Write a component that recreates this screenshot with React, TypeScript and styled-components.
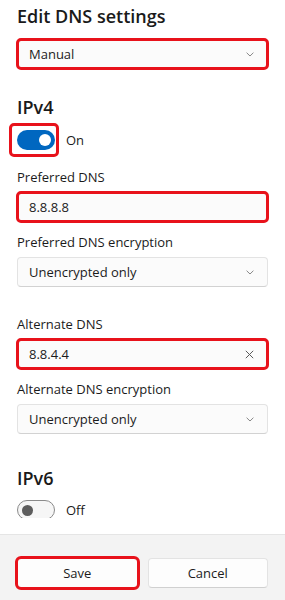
import { createGlobalStyle } from 'styled-components'
import styled from 'styled-components'

const GlobalStyle = createGlobalStyle`
  html, body {
    margin: 0;
    padding: 0;
    background: #ffffff;
  }
  body {
    font-family: 'Open Sans', 'Noto Sans', sans-serif;
    color: #1b1b1b;
  }
`

const Page = styled.div`
  width: 285px;
  height: 600px;
  display: flex;
  flex-direction: column;
  background: #ffffff;
  overflow: hidden;
`
const ScrollArea = styled.div`
  height: 518px;
  overflow: hidden;
  padding: 0 17px;
  box-sizing: border-box;
`
const Spacer = styled.div`
  height: 16px;
`
const Title = styled.h1`
  margin: 4px 0 0;
  font-size: 18px;
  line-height: 24px;
  font-weight: 600;
  color: #1a1a1a;
`
const Heading = styled.h2<{ $top: number }>`
  margin: ${(p) => p.$top}px 0 0;
  font-size: 18px;
  line-height: 24px;
  font-weight: 600;
  color: #1a1a1a;
`
const Label = styled.div<{ $top: number }>`
  margin: ${(p) => p.$top}px 0 5px;
  font-size: 13px;
  line-height: 20px;
  color: #1b1b1b;
`
const Field = styled.div<{ $marked?: boolean; $top?: number }>`
  margin-top: ${(p) => p.$top ?? 0}px;
  height: 30px;
  box-sizing: border-box;
  display: flex;
  align-items: center;
  justify-content: space-between;
  padding: 0 13px 0 11px;
  background: #fbfbfb;
  border: 1px solid #e3e3e3;
  border-bottom-color: #d2d2d2;
  border-radius: 4px;
  font-size: 13px;
  color: #1b1b1b;
  outline: ${(p) => (p.$marked ? '3px solid #e8121b' : 'none')};
  outline-offset: -2px;
`
const ToggleRow = styled.div<{ $top: number }>`
  margin-top: ${(p) => p.$top}px;
  display: flex;
  align-items: center;
  gap: 11px;
  font-size: 13px;
  line-height: 20px;
  color: #1b1b1b;
`
const ToggleFrame = styled.div<{ $marked?: boolean }>`
  margin: -7px -4px -7px -8px;
  padding: 4px 1px 4px 5px;
  border: 3px solid ${(p) => (p.$marked ? '#e8121b' : 'transparent')};
  border-radius: 5px;
  display: flex;
`
const Toggle = styled.div<{ $on?: boolean }>`
  width: 38px;
  height: 20px;
  box-sizing: border-box;
  border-radius: 10px;
  display: flex;
  align-items: center;
  justify-content: ${(p) => (p.$on ? 'flex-end' : 'flex-start')};
  padding: 0 4px;
  background: ${(p) => (p.$on ? '#0067c0' : '#f6f6f6')};
  border: ${(p) => (p.$on ? 'none' : '1px solid #8a8a8a')};
`
const Knob = styled.div<{ $on?: boolean }>`
  width: ${(p) => (p.$on ? 12 : 11)}px;
  height: ${(p) => (p.$on ? 12 : 11)}px;
  border-radius: 50%;
  background: ${(p) => (p.$on ? '#ffffff' : '#5d5d5d')};
`
const Footer = styled.div`
  flex: 1;
  border-top: 1px solid #e5e5e5;
  background: #f3f3f3;
  padding: 23px 17px 0;
  display: grid;
  grid-template-columns: 1fr 1fr;
  gap: 10px;
  align-content: start;
`
const Button = styled.button<{ $marked?: boolean }>`
  height: 30px;
  border: 1px solid #e3e3e3;
  border-bottom-color: #d0d0d0;
  border-radius: 4px;
  background: #fdfdfd;
  font-family: inherit;
  font-size: 13px;
  color: #1b1b1b;
  outline: ${(p) => (p.$marked ? '3px solid #e8121b' : 'none')};
  outline-offset: -1px;
`

const Chevron = () => (
  <svg width="8" height="5" viewBox="0 0 8 5" fill="none">
    <path d="M0.6 0.7 L4 4 L7.4 0.7" stroke="#7a7a7a" strokeWidth="0.9" />
  </svg>
)
const Cross = () => (
  <svg width="9" height="9" viewBox="0 0 9 9" fill="none">
    <path d="M0.8 0.8 L8.2 8.2 M8.2 0.8 L0.8 8.2" stroke="#5a5a5a" strokeWidth="1" />
  </svg>
)

const App = () => {
  return (
    <Page>
      <GlobalStyle />
      <ScrollArea>
        <Title>Edit DNS settings</Title>
        <Field $marked $top={11}>
          Manual <Chevron />
        </Field>

        <Heading $top={26}>IPv4</Heading>
        <ToggleRow $top={11}>
          <ToggleFrame $marked>
            <Toggle $on>
              <Knob $on />
            </Toggle>
          </ToggleFrame>
          On
        </ToggleRow>

        <Label $top={17}>Preferred DNS</Label>
        <Field $marked>8.8.8.8</Field>
        <Label $top={10}>Preferred DNS encryption</Label>
        <Field>
          Unencrypted only <Chevron />
        </Field>

        <Label $top={27}>Alternate DNS</Label>
        <Field $marked>
          8.8.4.4 <Cross />
        </Field>
        <Label $top={10}>Alternate DNS encryption</Label>
        <Field>
          Unencrypted only <Chevron />
        </Field>

        <Heading $top={32}>IPv6</Heading>
        <ToggleRow $top={10}>
          <ToggleFrame>
            <Toggle>
              <Knob />
            </Toggle>
          </ToggleFrame>
          Off
        </ToggleRow>
      </ScrollArea>
      <Spacer />
      <Footer>
        <Button $marked>Save</Button>
        <Button>Cancel</Button>
      </Footer>
    </Page>
  )
}

export default App
